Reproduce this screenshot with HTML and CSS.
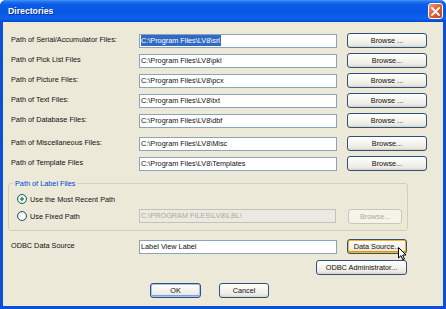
FILE: index.html
```html
<!DOCTYPE html>
<html>
<head>
<meta charset="utf-8">
<title>Directories</title>
<link rel="stylesheet" href="styles.css">
</head>
<body>
<div class="window">
  <div class="titlebar">
    <span class="title">Directories</span>
    <span class="close"><svg width="9" height="9" viewBox="0 0 9 9"><path d="M1 1 L8 8 M8 1 L1 8" stroke="#fff" stroke-width="1.8" stroke-linecap="square"/></svg></span>
  </div>
  <div class="content">
    <div class="paths">
      <div class="row"><span class="lbl">Path of Serial/Accumulator Files:</span><span class="field"><span class="hl">C:\Program Files\LV8\srl</span></span><span class="btn">Browse ...</span></div>
      <div class="row"><span class="lbl">Path of Pick List Files</span><span class="field">C:\Program Files\LV8\pkl</span><span class="btn">Browse...</span></div>
      <div class="row"><span class="lbl">Path of Picture Files:</span><span class="field">C:\Program Files\LV8\pcx</span><span class="btn">Browse ...</span></div>
      <div class="row"><span class="lbl">Path of Text Files:</span><span class="field">C:\Program Files\LV8\txt</span><span class="btn">Browse ...</span></div>
      <div class="row"><span class="lbl">Path of Database Files:</span><span class="field">C:\Program Files\LV8\dbf</span><span class="btn">Browse ...</span></div>
      <div class="row row-gap"><span class="lbl">Path of Miscellaneous Files:</span><span class="field">C:\Program Files\LV8\Misc</span><span class="btn">Browse...</span></div>
      <div class="row"><span class="lbl">Path of Template Files</span><span class="field">C:\Program Files\LV8\Templates</span><span class="btn">Browse...</span></div>
    </div>
    <fieldset class="group">
      <legend>Path of Label Files</legend>
      <div class="grow">
        <span class="opt"><span class="radio checked"></span>Use the Most Recent Path</span>
      </div>
      <div class="grow">
        <span class="opt"><span class="radio"></span>Use Fixed Path</span>
        <span class="field disabled">C:\PROGRAM FILES\LV8\LBL\</span>
        <span class="btn btn-disabled">Browse...</span>
      </div>
    </fieldset>
    <div class="row odbc"><span class="lbl">ODBC Data Source</span><span class="field">Label View Label</span><span class="btn btn-hover">Data Source...</span></div>
    <div class="admin"><span class="btn btn-admin">ODBC Administrator...</span></div>
    <div class="actions"><span class="btn btn-ok">OK</span><span class="btn btn-cancel">Cancel</span></div>
    <svg class="cursor" width="9" height="14" viewBox="0 0 9 14"><path d="M0.5 0.5 L0.5 11 L3 8.6 L4.8 12.8 L6.4 12.1 L4.7 8 L8 8 Z" fill="#fff" stroke="#000" stroke-width="1" stroke-linejoin="miter"/></svg>
  </div>
</div>
</body>
</html>
```
FILE: styles.css
```css
html, body {
  margin: 0;
  padding: 0;
  background: #ffffff;
}
body {
  font-family: "Liberation Sans", Arial, sans-serif;
  font-size: 7.3px;
  color: #111;
}
.window {
  width: 446px;
  height: 309px;
  display: flex;
  flex-direction: column;
  overflow: hidden;
  border-radius: 6px 6px 0 0;
  background: #0054E3;
}
.titlebar {
  height: 22px;
  flex: none;
  display: flex;
  align-items: flex-start;
  padding: 0 3px 0 8px;
  background: linear-gradient(to bottom, #4A94F8 0%, #2272F0 8%, #0A5DE8 20%, #0757E4 55%, #0E62EC 85%, #0049CA 100%);
  box-sizing: border-box;
}
.title {
  flex: 1;
  color: #fff;
  font-weight: bold;
  font-size: 8.7px;
  line-height: 22px;
  text-shadow: 1px 1px 0 #0A2A8C;
}
.close {
  width: 15px;
  height: 16px;
  margin-top: 3px;
  box-sizing: border-box;
  border: 1px solid #fff;
  border-radius: 3px;
  background: linear-gradient(135deg, #EE9A7C 0%, #E0643C 45%, #C93D18 100%);
  display: flex;
  align-items: center;
  justify-content: center;
}
.content {
  flex: 1;
  position: relative;
  background: #ECE9D8;
  border: 3px solid #0D50D8;
  border-top: none;
  padding: 11px 0 0 5px;
  box-sizing: border-box;
}
.paths {
  display: flex;
  flex-direction: column;
  gap: 5px;
}
.row {
  display: grid;
  grid-template-columns: 118px 198px 80px;
  column-gap: 10px;
  align-items: center;
  height: 15px;
  padding-left: 3px;
}
.row-gap {
  margin-top: 3px;
}
.lbl {
  white-space: nowrap;
  line-height: 9px;
  margin-top: -2px;
}
.field {
  height: 14px;
  box-sizing: border-box;
  border: 1px solid #8AA4BE;
  background: #fff;
  padding: 0 1px;
  line-height: 12px;
  white-space: nowrap;
  overflow: hidden;
  display: flex;
  align-items: center;
}
.hl {
  background: #316AC5;
  color: #fff;
  line-height: 11px;
  padding-right: 1px;
}
.field.disabled {
  width: 198px;
  background: #EBEAE2;
  border-color: #C4C2B5;
  color: #ACA899;
}
.btn {
  height: 15px;
  box-sizing: border-box;
  border: 1px solid #2F5279;
  border-radius: 3px;
  background: linear-gradient(to bottom, #FFFFFF 0%, #F6F5F0 40%, #EDEBE3 80%, #D8D3C6 100%);
  display: flex;
  align-items: center;
  justify-content: center;
  white-space: nowrap;
  line-height: 9px;
}
.btn-disabled {
  width: 54px;
  margin-left: 12px;
  border-color: #C9C7BA;
  background: #F5F4EA;
  color: #ACA899;
}
.btn-hover {
  width: 60px;
  box-shadow: inset 0 0 0 1px #F8B330, inset 0 -1px 0 1px #E59700;
}
.group {
  margin: 8px 0 0 0;
  width: 400px;
  box-sizing: border-box;
  border: 1px solid #D0D0BF;
  border-radius: 3px;
  padding: 4px 5px 7px 8px;
  display: flex;
  flex-direction: column;
  gap: 3px;
  min-width: 0;
}
.group legend {
  color: #0046D5;
  line-height: 9px;
  padding: 0 2px;
  margin-left: -4px;
}
.grow {
  display: flex;
  align-items: center;
  height: 14px;
}
.opt {
  width: 122px;
  flex: none;
  display: flex;
  align-items: center;
  gap: 3px;
  white-space: nowrap;
}
.radio {
  width: 10px;
  height: 10px;
  box-sizing: border-box;
  border-radius: 50%;
  border: 1px solid #1C5180;
  background: radial-gradient(circle at 60% 60%, #FFFFFF 0%, #F2F1EA 50%, #D8D5CB 100%);
  flex: none;
}
.radio.checked {
  background: radial-gradient(circle at 50% 50%, #2DB52D 0%, #1E9A1E 26%, #FFFFFF 32%, #EEEDE6 70%, #D8D5CB 100%);
}
.odbc {
  margin-top: 8px;
}
.admin {
  display: flex;
  justify-content: flex-end;
  width: 399px;
  margin-top: 6px;
}
.btn-admin {
  width: 91px;
}
.actions {
  display: flex;
  gap: 18px;
  padding-left: 142px;
  margin-top: 8px;
}
.btn-ok {
  width: 51px;
  box-shadow: inset 0 0 0 1px #A7C1F2, inset 0 -1px 0 1px #7A9DE8;
}
.btn-cancel {
  width: 50px;
}
.cursor {
  position: absolute;
  left: 395px;
  top: 225px;
}
```
